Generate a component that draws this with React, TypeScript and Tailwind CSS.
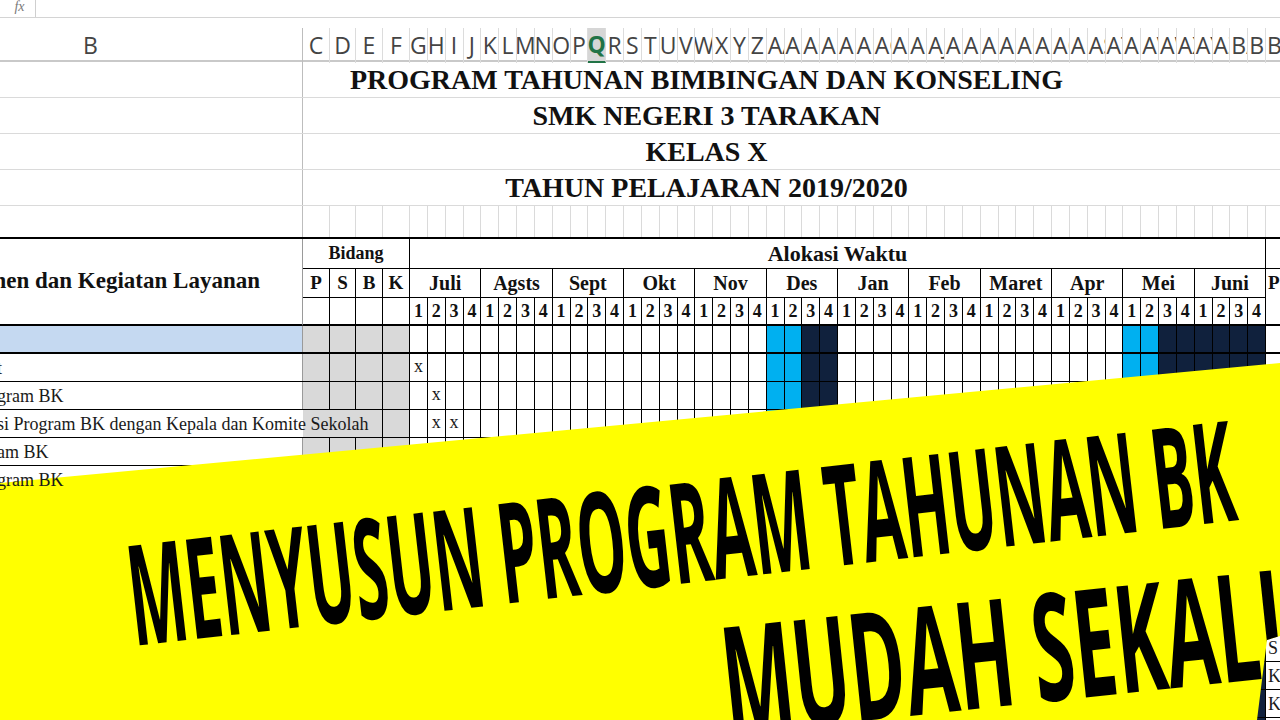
import React from 'react';

const MONTHS = ['Juli', 'Agsts', 'Sept', 'Okt', 'Nov', 'Des', 'Jan', 'Feb', 'Maret', 'Apr', 'Mei', 'Juni'];

const colName = (n: number) => {
  let s = '';
  let k = n + 1;
  while (k > 0) {
    const r = (k - 1) % 26;
    s = String.fromCharCode(65 + r) + s;
    k = Math.floor((k - 1) / 26);
  }
  return s;
};

const WEEKS = Array.from({ length: 48 }, (_, i) => i);

const weekFill = (i: number) => {
  if (i === 20 || i === 21 || i === 40 || i === 41) return 'bg-[#00b0f0]';
  if (i === 22 || i === 23 || i >= 42) return 'bg-[#10213d]';
  return 'bg-white';
};

type Row = { text: string; blue?: boolean; marks?: number[]; spill?: boolean; last?: string };

const ROWS: Row[] = [
  { text: '', blue: true },
  { text: 't', marks: [0] },
  { text: 'gram BK', marks: [1] },
  { text: 'si Program BK dengan Kepala dan Komite Sekolah', marks: [1, 2], spill: true },
  { text: 'am BK' },
  { text: 'gram BK' },
  { text: '' },
  { text: '' },
  { text: '' },
  { text: '' },
  { text: '' },
  { text: '', last: 'S' },
  { text: '', last: 'K' },
  { text: '', last: 'K' },
  { text: '', last: 'K' },
];

const GRID = 'grid grid-cols-[303px_27px_26px_27px_27px_repeat(48,minmax(0,1fr))_14px]';
const cell = 'border-r border-b border-black';

const ColumnHeader = () => (
  <div className={`${GRID} h-[34px] border-b-2 border-[#c9c9c9] font-['Open_Sans',sans-serif] text-[23px] text-[#444]`}>
    <div className="flex items-center pl-[83px] border-r border-[#bdbdbd]">B</div>
    {['C', 'D', 'E', 'F'].map((c) => (
      <div key={c} className="flex items-center justify-center border-r border-[#dcdcdc]">{c}</div>
    ))}
    {WEEKS.map((i) => {
      const name = colName(6 + i);
      const sel = name === 'Q';
      const wide = name.length > 1;
      return (
        <div
          key={i}
          className={`flex items-center overflow-hidden border-r border-[#dcdcdc] ${
            wide ? 'justify-start pl-[1px]' : 'justify-center'
          } ${sel ? 'bg-[#d6d6d6] text-[#217346] font-bold border-b-2 border-b-[#217346]' : ''}`}
        >
          <span className="whitespace-nowrap">{name}</span>
        </div>
      );
    })}
    <div className="flex items-center overflow-hidden pl-[1px]">
      <span className="whitespace-nowrap">BC</span>
    </div>
  </div>
);

const TitleRow = ({ text }: { text: string }) => (
  <div className="flex h-[36px] border-b border-[#dadada]">
    <div className="w-[303px] border-r border-[#bdbdbd]" />
    <div className="w-[807px] flex items-center justify-center text-[28px] font-bold text-[#111]">{text}</div>
  </div>
);

const TableHead = () => (
  <div className={`${GRID} grid-rows-[30px_29px_28px] border-t-2 border-black font-bold text-[#111]`}>
    <div className="row-span-3 flex items-center justify-end pr-[42px] overflow-hidden border-r border-b-2 border-r-[#9a9a9a] border-b-black text-[23px] whitespace-nowrap">
      Komponen dan Kegiatan Layanan
    </div>
    <div className={`col-span-4 flex items-center justify-center text-[18px] ${cell}`}>Bidang</div>
    <div className={`col-span-48 flex items-center justify-center text-[22px] ${cell}`}>Alokasi Waktu</div>
    <div className="border-b border-black" />
    {['P', 'S', 'B', 'K'].map((c) => (
      <div key={c} className={`flex items-center justify-center text-[19px] ${cell}`}>{c}</div>
    ))}
    {MONTHS.map((m) => (
      <div key={m} className={`col-span-4 flex items-center justify-center text-[20px] ${cell}`}>{m}</div>
    ))}
    <div className="flex items-center pl-[2px] text-[19px] overflow-hidden">P</div>
    {[0, 1, 2, 3].map((c) => (
      <div key={c} className="border-r border-b-2 border-black" />
    ))}
    {WEEKS.map((i) => (
      <div key={i} className="flex items-center justify-center text-[18px] border-r border-b-2 border-black">
        {(i % 4) + 1}
      </div>
    ))}
    <div className="border-b-2 border-black" />
  </div>
);

const DataRow = ({ row, idx }: { row: Row; idx: number }) => (
  <div
    className={`${GRID} h-[28px] grid-rows-[minmax(0,1fr)] ${idx === 0 ? 'border-b-2' : 'border-b'} border-black text-[18px] leading-[22px] text-[#1a1a1a]`}
  >
    <div
      className={`flex items-center whitespace-nowrap ${row.blue ? 'bg-[#c5d9f1]' : 'bg-white'} ${
        row.spill ? '' : 'border-r border-[#9a9a9a] overflow-hidden'
      }`}
    >
      <span className="relative z-10 ml-[-3px]">{row.text}</span>
    </div>
    {[0, 1, 2, 3].map((c) => (
      <div key={c} className={`bg-[#d9d9d9] ${row.spill && c < 2 ? '' : 'border-r border-black'}`} />
    ))}
    {WEEKS.map((i) => (
      <div key={i} className={`flex items-center justify-center overflow-hidden border-r border-black pb-[3px] ${weekFill(i)}`}>
        {row.marks?.includes(i) ? 'x' : ''}
      </div>
    ))}
    <div className="flex items-center overflow-hidden pl-[2px] bg-white">{row.last ?? ''}</div>
  </div>
);

const Banner = () => (
  <div className="absolute inset-0 bg-[#ffff00] [clip-path:polygon(0_483px,1280px_363px,1280px_636px,1267px_640px,1257px_720px,0_720px)] font-['Open_Sans',sans-serif] font-bold text-black">
    <div className="absolute left-[136px] top-[522px] text-[140px] leading-none whitespace-nowrap origin-bottom-left [transform:rotate(-6.5deg)_scaleX(0.438)]">
      MENYUSUN PROGRAM TAHUNAN BK
    </div>
    <div className="absolute left-[730px] top-[602px] text-[150px] leading-none whitespace-nowrap origin-bottom-left [transform:rotate(-6deg)_scaleX(0.5)]">
      MUDAH SEKALI
    </div>
  </div>
);

export default function App() {
  return (
    <div className="relative w-[1280px] h-[720px] overflow-hidden bg-white font-['Liberation_Serif',serif]">
      {/* formula bar */}
      <div className="flex h-[18px] border-b border-[#d4d4d4]">
        <div className="w-[36px] border-r border-[#cfcfcf] flex justify-center">
          <span className="-mt-[4px] ml-[4px] italic text-[14px] text-[#7a7a7a]">fx</span>
        </div>
        <div className="flex-1" />
      </div>
      <div className="h-[10px]" />

      <ColumnHeader />

      <TitleRow text="PROGRAM TAHUNAN BIMBINGAN DAN KONSELING" />
      <TitleRow text="SMK NEGERI 3 TARAKAN" />
      <TitleRow text="KELAS X" />
      <TitleRow text="TAHUN PELAJARAN 2019/2020" />

      {/* empty spacer row with gridlines */}
      <div className={`${GRID} h-[31px]`}>
        <div className="border-r border-[#bdbdbd]" />
        {Array.from({ length: 52 }, (_, i) => (
          <div key={i} className="border-r border-[#dadada]" />
        ))}
        <div />
      </div>

      <TableHead />
      {ROWS.map((r, i) => (
        <DataRow key={i} row={r} idx={i} />
      ))}

      <Banner />
    </div>
  );
}
